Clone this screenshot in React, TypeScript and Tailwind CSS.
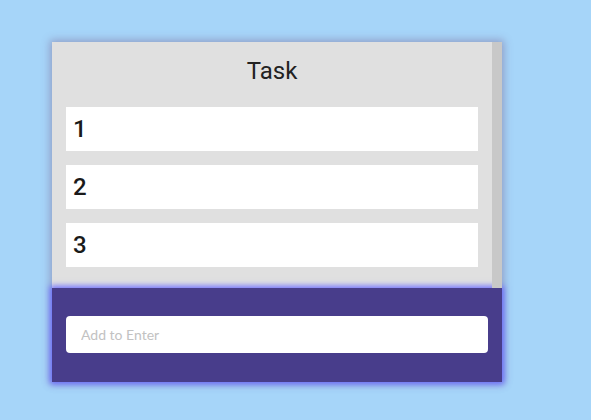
import React from "react";

export default function App() {
  const items = ["1", "2", "3"];
  return (
    <div className="w-[591px] h-[420px] bg-[#a6d5f9] pt-[42px] pl-[52px]" style={{ fontFamily: "Roboto, sans-serif" }}>
      <div className="w-[450px] shadow-[0_0_8px_2px_rgba(120,90,140,0.45)]">
        <div className="flex bg-[#e0e0e0]">
          <div className="w-[440px] px-[14px] pb-[21px]">
            <div className="pt-[13px] h-[45px] mb-[20px] text-center text-[24px] leading-[32px] text-[#222]">Task</div>
            <div className="flex flex-col gap-[14px]">
              {items.map((t) => (
                <div key={t} className="h-[44px] bg-white flex items-center pl-[7px] text-[24px] font-medium text-[#1a1a1a]">
                  {t}
                </div>
              ))}
            </div>
          </div>
          <div className="w-[10px] bg-[#c8c8c8]" />
        </div>
        <div className="h-[94px] bg-[#483d8b] pt-[28px] px-[14px] shadow-[0_0_6px_2px_#6a6aff]">
          <input
            className="w-[422px] h-[37px] rounded-[4px] bg-white pl-[15px] text-[14px] outline-none placeholder:text-[#c2c2c2]"
            style={{ fontFamily: "Lato, sans-serif" }}
            placeholder="Add to Enter"
          />
        </div>
      </div>
    </div>
  );
}
